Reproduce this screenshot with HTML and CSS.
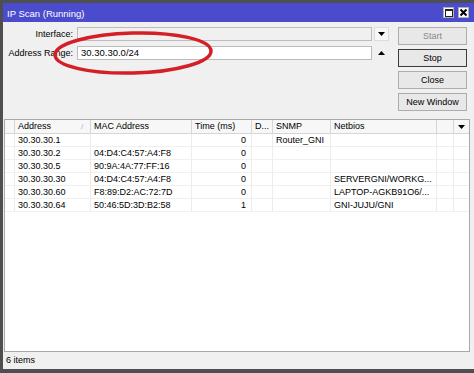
FILE: index.html
```html
<!DOCTYPE html>
<html>
<head>
<meta charset="utf-8">
<link rel="stylesheet" href="styles.css">
</head>
<body>
<div class="window">
  <div class="titlebar">
    <span class="title">IP Scan (Running)</span>
    <span class="tbtn max"><span class="maxicon"></span></span>
    <span class="tbtn close">
      <svg width="9" height="9" viewBox="0 0 9 9"><path d="M1.5 1.5 L7.5 7.5 M7.5 1.5 L1.5 7.5" stroke="#000" stroke-width="2"/></svg>
    </span>
  </div>
  <div class="top">
    <div class="form">
      <label class="lbl">Interface:</label>
      <div class="field disabled"></div>
      <div class="arrow boxed">
        <svg width="7" height="4" viewBox="0 0 7 4"><path d="M0 0 H7 L3.5 4 Z" fill="#000"/></svg>
      </div>
      <label class="lbl">Address Range:</label>
      <div class="field">30.30.30.0/24</div>
      <div class="arrow">
        <svg width="7" height="4" viewBox="0 0 7 4"><path d="M0 4 H7 L3.5 0 Z" fill="#000"/></svg>
      </div>
    </div>
    <div class="buttons">
      <div class="btn disabled">Start</div>
      <div class="btn default">Stop</div>
      <div class="btn">Close</div>
      <div class="btn">New Window</div>
    </div>
  </div>
  <div class="table">
    <div class="row head">
      <div class="c"></div>
      <div class="c sort">Address<span class="sorti">/</span></div>
      <div class="c">MAC Address</div>
      <div class="c">Time (ms)</div>
      <div class="c">D...</div>
      <div class="c">SNMP</div>
      <div class="c">Netbios</div>
      <div class="c"></div>
      <div class="c dd"><svg width="7" height="4" viewBox="0 0 7 4"><path d="M0 0 H7 L3.5 4 Z" fill="#000"/></svg></div>
    </div>
    <div class="row">
      <div class="c"></div><div class="c">30.30.30.1</div><div class="c"></div><div class="c num">0</div><div class="c"></div><div class="c">Router_GNI</div><div class="c"></div><div class="c"></div><div class="c last"></div>
    </div>
    <div class="row">
      <div class="c"></div><div class="c">30.30.30.2</div><div class="c">04:D4:C4:57:A4:F8</div><div class="c num">0</div><div class="c"></div><div class="c"></div><div class="c"></div><div class="c"></div><div class="c last"></div>
    </div>
    <div class="row">
      <div class="c"></div><div class="c">30.30.30.5</div><div class="c">90:9A:4A:77:FF:16</div><div class="c num">0</div><div class="c"></div><div class="c"></div><div class="c"></div><div class="c"></div><div class="c last"></div>
    </div>
    <div class="row">
      <div class="c"></div><div class="c">30.30.30.30</div><div class="c">04:D4:C4:57:A4:F8</div><div class="c num">0</div><div class="c"></div><div class="c"></div><div class="c">SERVERGNI/WORKG...</div><div class="c"></div><div class="c last"></div>
    </div>
    <div class="row">
      <div class="c"></div><div class="c">30.30.30.60</div><div class="c">F8:89:D2:AC:72:7D</div><div class="c num">0</div><div class="c"></div><div class="c"></div><div class="c">LAPTOP-AGKB91O6/...</div><div class="c"></div><div class="c last"></div>
    </div>
    <div class="row">
      <div class="c"></div><div class="c">30.30.30.64</div><div class="c">50:46:5D:3D:B2:58</div><div class="c num">1</div><div class="c"></div><div class="c"></div><div class="c">GNI-JUJU/GNI</div><div class="c"></div><div class="c last"></div>
    </div>
  </div>
  <div class="status">6 items</div>
  <svg class="mark" width="170" height="50" viewBox="0 0 170 50">
    <ellipse cx="85" cy="25" rx="78" ry="20" fill="none" stroke="#d41f27" stroke-width="3.5" transform="rotate(-1.5 85 25)"/>
  </svg>
</div>
</body>
</html>
```

FILE: styles.css
```css
* { box-sizing: border-box; }
html, body { margin: 0; padding: 0; }
body {
  font-family: "Liberation Sans", Arial, sans-serif;
  font-size: 9px;
  color: #000;
  background: #f0f0f0;
}
.window {
  position: relative;
  width: 474px;
  height: 373px;
  border-left: 3px solid #4f4f4f;
  border-top: 3px solid #4f4f4f;
  border-bottom: 4px solid #4f4f4f;
  background: #f0f0f0;
  display: flex;
  flex-direction: column;
}
.titlebar {
  height: 19px;
  flex-shrink: 0;
  background: #4b4bcd;
  display: flex;
  align-items: center;
  padding: 0 5px 0 4px;
}
.title {
  color: #fff;
  font-size: 9.5px;
  flex: 1;
  padding-top: 1px;
}
.tbtn {
  width: 11px;
  height: 11px;
  background: #fff;
  border: 1px solid #b0b0b0;
  display: flex;
  align-items: center;
  justify-content: center;
  margin-left: 4px;
}
.maxicon {
  width: 8px;
  height: 8px;
  border: 1px solid #222;
  border-top-width: 2px;
}
.top {
  height: 97px;
  flex-shrink: 0;
  display: flex;
  align-items: flex-start;
}
.form {
  display: grid;
  grid-template-columns: 70px 295px 13px;
  grid-auto-rows: 14px;
  column-gap: 4px;
  row-gap: 5px;
  padding-top: 5px;
}
.form .arrow { margin-left: -2px; }
.lbl {
  text-align: right;
  line-height: 14px;
}
.field {
  background: #fff;
  border: 1px solid #bcbcbc;
  line-height: 12px;
  padding-left: 3px;
  font-size: 9.5px;
}
.field.disabled { background: #f0f0f0; }
.arrow {
  display: flex;
  align-items: center;
  justify-content: center;
  height: 14px;
}
.arrow.boxed {
  background: #f7f7f7;
  border: 1px solid #dcdcdc;
}
.buttons {
  margin-left: 9px;
  padding-top: 5px;
  width: 69px;
  display: flex;
  flex-direction: column;
  gap: 4px;
}
.btn {
  height: 18px;
  border: 1px solid #adadad;
  background: #e8e8e8;
  text-align: center;
  line-height: 16px;
  font-size: 9px;
}
.btn.disabled { color: #8a8a8a; }
.btn.default { border-color: #3c3c3c; }
.table {
  flex: 1;
  margin: 0 4px 0 1px;
  background: #fff;
  border: 1px solid #a8a8a8;
}
.row {
  display: grid;
  grid-template-columns: 10px 76px 101px 60px 21px 58px 106px 17px 15px;
  height: 13px;
}
.row .c {
  border-right: 1px solid #ececec;
  border-bottom: 1px solid #f0f0f0;
  line-height: 12px;
  padding-left: 3px;
  white-space: nowrap;
  overflow: hidden;
}
.row .c.last { border-right: none; }
.row .c.num { text-align: right; padding-right: 5px; }
.row.head { height: 14px; background: #f7f7f7; }
.row.head .c {
  border-right: 1px solid #d6d6d6;
  border-bottom: 1px solid #d6d6d6;
  line-height: 13px;
  position: relative;
}
.row.head .c.dd {
  border-right: none;
  display: flex;
  align-items: center;
  justify-content: center;
  padding-left: 0;
}
.sorti {
  position: absolute;
  left: 66px;
  top: 0;
  color: #b0b0b0;
  font-size: 8px;
}
.status {
  height: 17px;
  flex-shrink: 0;
  line-height: 17px;
  padding-left: 3px;
  background: #f0f0f0;
}
.mark {
  position: absolute;
  left: 45px;
  top: 25px;
  pointer-events: none;
}
```
